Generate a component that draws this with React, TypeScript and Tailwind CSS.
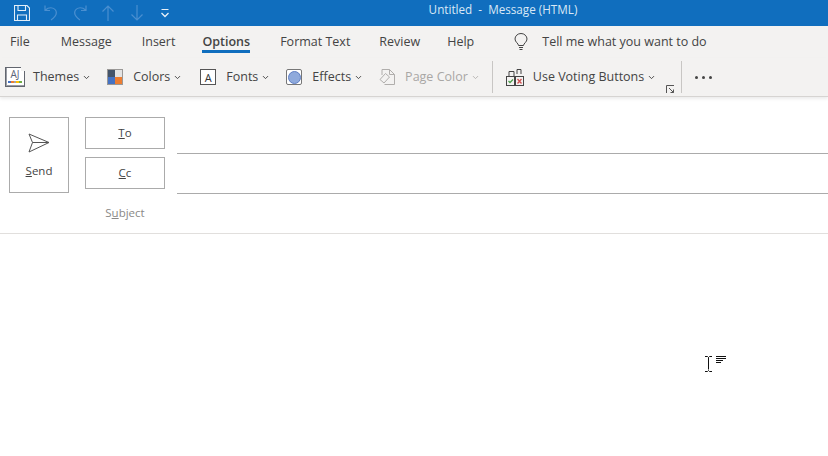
import { ChevronDown } from "lucide-react";

const font = "font-['Open_Sans','Noto_Sans',sans-serif]";

function Caret({ light }: { light?: boolean }) {
  return (
    <ChevronDown
      strokeWidth={2.5}
      className={`ml-[3px] h-[9px] w-[9px] ${light ? "text-[#b5b3b1]" : "text-[#444]"}`}
    />
  );
}

function SaveIcon() {
  return (
    <svg width="16" height="16" viewBox="0 0 16 16" fill="none" stroke="#e3eef8" strokeWidth="1.100">
      <path d="M0.500 0.500h12.500l2.500 2.500v12.500h-15z" />
      <path d="M4 0.500v5h7.500v-5M3.500 15.500v-5.500h9v5.500" />
    </svg>
  );
}

function QuickIcons() {
  return (
    <div className="flex items-center">
      <div className="ml-[14px]">
        <SaveIcon />
      </div>
      <svg className="ml-[13px]" width="16" height="18" viewBox="0 0 16 18" fill="none" stroke="#4a8fd0" strokeWidth="1.2">
        <path d="M2 1.500v5h5M2.500 6c3-3 8-3 10 0 2 3.500 0 7-4.500 10" />
      </svg>
      <svg className="ml-[13px]" width="16" height="18" viewBox="0 0 16 18" fill="none" stroke="#4a8fd0" strokeWidth="1.2">
        <path d="M14 1.500v5h-5M13.500 6c-3-3-8-3-10 0-2 3.500 0 7 4.500 10" />
      </svg>
      <svg className="ml-[13px]" width="14" height="18" viewBox="0 0 14 18" fill="none" stroke="#4a8fd0" strokeWidth="1.2">
        <path d="M7 17V2M1.500 7.500L7 2l5.500 5.500" />
      </svg>
      <svg className="ml-[15px]" width="14" height="18" viewBox="0 0 14 18" fill="none" stroke="#4a8fd0" strokeWidth="1.2">
        <path d="M7 1v15M1.500 10.500L7 16l5.500-5.500" />
      </svg>
      <svg className="ml-[16px]" width="10" height="10" viewBox="0 0 10 10" fill="none" stroke="#e8f0f8" strokeWidth="1">
        <path d="M1.500 1.500h7" />
        <path d="M1.500 5l3.500 3.500L8.500 5" strokeWidth="1.300" />
      </svg>
    </div>
  );
}

function ThemesIcon() {
  return (
    <div className="relative flex h-[20px] w-[20px] flex-col items-center border border-[#62666f] bg-white shadow-[inset_1px_-1px_0_#9a9da5]">
      <span className="text-[10px] leading-[12px] text-[#5a6478]">AJ</span>
      <div className="mt-[1px] flex h-[2px] w-[14px]">
        <div className="flex-1 bg-[#4472c4]" />
        <div className="flex-1 bg-[#ed7d31]" />
        <div className="flex-1 bg-[#a5a5a5]" />
        <div className="flex-1 bg-[#ffc000]" />
        <div className="flex-1 bg-[#70ad47]" />
      </div>
      <div className="absolute -top-px -right-px h-[4px] w-[4px] bg-[#f3f2f1]" />
    </div>
  );
}

function ColorsIcon() {
  return (
    <div className="grid h-[16px] w-[16px] grid-cols-2 grid-rows-2 border border-[#9a9896]">
      <div className="bg-[#44546a]" />
      <div className="bg-[#e3e3e3]" />
      <div className="bg-[#4472c4]" />
      <div className="bg-[#ed7d31]" />
    </div>
  );
}

function FontsIcon() {
  return (
    <div className="flex h-[16px] w-[16px] items-center justify-center border border-[#555] bg-white text-[11px] leading-none text-[#333]">
      A
    </div>
  );
}

function EffectsIcon() {
  return (
    <div className="flex h-[16px] w-[16px] items-center justify-center rounded-[2px] border border-[#777] bg-white">
      <div className="h-[13px] w-[13px] rounded-full border border-[#5f7fc4] bg-[#8faadc]" />
    </div>
  );
}

function PageColorIcon() {
  return (
    <svg width="16" height="18" viewBox="0 0 16 18" fill="none" stroke="#b0aeac" strokeWidth="1">
      <path d="M3 7V1.500h7.500l5 5v10H5.500" />
      <path d="M10.500 1.500v5h5" />
      <path d="M1 11.500l5.500-6 4 3.500-5.500 6z" />
    </svg>
  );
}

function VotingIcon() {
  return (
    <svg width="18" height="18" viewBox="0 0 18 18">
      <path d="M3 8V3.500h5V8M11 6V1.500h4V6" fill="none" stroke="#444" />
      <rect x="0.500" y="8.500" width="8" height="9" fill="none" stroke="#444" />
      <rect x="9.500" y="8.500" width="8" height="9" fill="none" stroke="#444" />
      <path d="M2.500 13l1.500 1.500 3-3" fill="none" stroke="#4a9e4a" strokeWidth="1.300" />
      <path d="M11.500 11l4 4.500m0-4.500l-4 4.500" fill="none" stroke="#d05050" strokeWidth="1.300" />
    </svg>
  );
}

function RibbonItem({
  icon,
  label,
  className,
  gap,
  disabled,
}: {
  icon: React.ReactNode;
  label: string;
  className: string;
  gap: string;
  disabled?: boolean;
}) {
  return (
    <div className={`flex items-center ${className}`}>
      {icon}
      <span className={`text-[12.5px] ${gap} ${disabled ? "text-[#a9a7a5]" : "text-[#444]"}`}>
        {label}
      </span>
      <Caret light={disabled} />
    </div>
  );
}

function AddressButton({ children }: { children: React.ReactNode }) {
  return (
    <div className="flex h-[32px] w-[80px] items-center justify-center border border-[#ababab] text-[11.5px] text-[#444]">
      {children}
    </div>
  );
}

export default function App() {
  return (
    <div className={`relative flex h-[456px] w-[828px] flex-col overflow-hidden bg-white ${font}`}>
      {/* title bar */}
      <div className="relative flex h-[26px] shrink-0 items-center bg-[#106ebe]">
        <QuickIcons />
        <div className="absolute inset-x-0 top-0 flex h-[18px] justify-center pl-[178px] text-[11.7px] leading-[18px] whitespace-pre text-[#d9e8f6]">
          Untitled  -  Message (HTML)
        </div>
      </div>

      {/* tabs */}
      <div className="flex h-[32px] shrink-0 items-center bg-[#f3f2f1] text-[12.5px] text-[#444]">
        <span className="ml-[10px]">File</span>
        <span className="ml-[31px]">Message</span>
        <span className="ml-[30px]">Insert</span>
        <div className="relative ml-[27px]">
          <span className="font-semibold">Options</span>
          <div className="absolute inset-x-0 -bottom-[2px] h-[3px] bg-[#106ebe]" />
        </div>
        <span className="ml-[30px]">Format Text</span>
        <span className="ml-[29px]">Review</span>
        <span className="ml-[27px]">Help</span>
        <svg className="ml-[40px]" width="14" height="18" viewBox="0 0 14 18" fill="none" stroke="#444" strokeWidth="1">
          <path d="M4.500 12.500c0-2-3.500-3.500-3.500-6.500a6 5.500 0 0 1 12 0c0 3-3.500 4.500-3.500 6.500z" />
          <path d="M5 14.500h4M5.500 16.500h3" />
        </svg>
        <span className="ml-[14px]">Tell me what you want to do</span>
      </div>

      {/* ribbon */}
      <div className="flex h-[39px] shrink-0 items-center border-b border-[#d6d4d2] bg-[#f3f2f1] shadow-[0_2px_3px_rgba(0,0,0,0.08)]">
        <RibbonItem className="ml-[5px]" gap="ml-[8px]" icon={<ThemesIcon />} label="Themes" />
        <RibbonItem className="ml-[16px]" gap="ml-[10px]" icon={<ColorsIcon />} label="Colors" />
        <RibbonItem className="ml-[18px]" gap="ml-[10px]" icon={<FontsIcon />} label="Fonts" />
        <RibbonItem className="ml-[16px]" gap="ml-[10px]" icon={<EffectsIcon />} label="Effects" />
        <RibbonItem className="ml-[16px]" gap="ml-[10px]" icon={<PageColorIcon />} label="Page Color" disabled />
        <div className="ml-[12px] h-[32px] w-px bg-[#c8c6c4]" />
        <RibbonItem className="ml-[13px]" gap="ml-[9px]" icon={<VotingIcon />} label="Use Voting Buttons" />
        <div className="relative ml-[25px] h-[32px] w-px bg-[#c8c6c4]">
          <svg className="absolute -bottom-[1px] -left-[15px]" width="9" height="9" viewBox="0 0 9 9" fill="none" stroke="#555">
            <path d="M0.500 8V0.500H8M3 3l4.500 4.500M7.500 4.500v3h-3" />
          </svg>
        </div>
        <div className="ml-[13px] flex gap-[4px]">
          <div className="h-[3px] w-[3px] rounded-full bg-[#444]" />
          <div className="h-[3px] w-[3px] rounded-full bg-[#444]" />
          <div className="h-[3px] w-[3px] rounded-full bg-[#444]" />
        </div>
      </div>

      {/* compose header */}
      <div className="flex h-[137px] shrink-0 border-b border-[#e1dfdd] pt-[20px] pl-[9px]">
        <div className="flex h-[76px] w-[60px] flex-col items-center border border-[#ababab]">
          <svg className="mt-[15px]" width="22" height="20" viewBox="0 0 22 20" fill="none" stroke="#555" strokeWidth="1">
            <path d="M1 1l20 8.500L1 19l3.500-9.500z" />
            <path d="M4.500 9.500H21" />
          </svg>
          <span className="mt-[10px] text-[11.5px] leading-[16px] text-[#444]">
            <span className="underline">S</span>end
          </span>
        </div>
        <div className="ml-[16px] flex w-[80px] flex-col">
          <AddressButton>
            <span>
              <span className="underline">T</span>o
            </span>
          </AddressButton>
          <div className="mt-[8px]">
            <AddressButton>
              <span>
                <span className="underline">C</span>c
              </span>
            </AddressButton>
          </div>
          <div className="mt-[16px] text-center text-[11.5px] leading-[16px] text-[#8a8886]">
            S<span className="underline">u</span>bject
          </div>
        </div>
        <div className="ml-[12px] flex flex-1 flex-col">
          <div className="mt-[36px] h-px bg-[#ababab]" />
          <div className="mt-[39px] h-px bg-[#ababab]" />
        </div>
      </div>

      {/* text cursor over the message body */}
      <svg className="absolute top-[355px] left-[704px]" width="24" height="18" viewBox="0 0 24 18" fill="none" stroke="#111">
        <path d="M1 1.500h2.500l1 1 1-1H8M4.500 2.500v12M1 16.500h2.500l1-1 1 1H8" />
        <path d="M12 1.500h10M12 3.500h10M12 5.500h7M12 7.500h5" />
      </svg>
    </div>
  );
}
